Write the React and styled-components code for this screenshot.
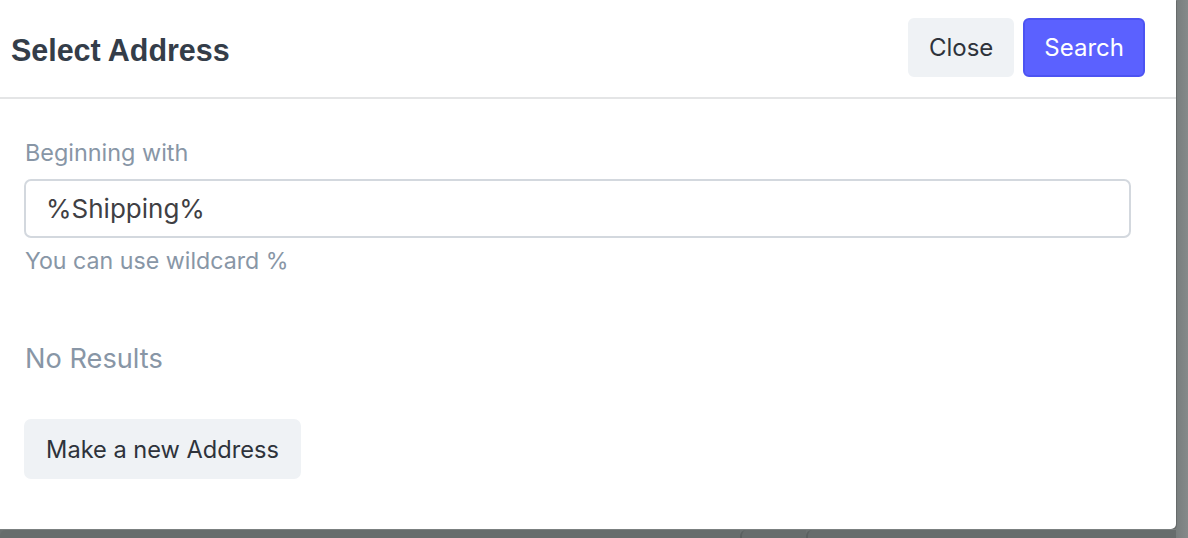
import styled, { createGlobalStyle } from "styled-components";

const GlobalStyle = createGlobalStyle`
  html, body {
    margin: 0;
    padding: 0;
    height: 100%;
  }
  body {
    background: linear-gradient(90deg, #6c7171 0%, #6c7171 98%, #858a8a 100%);
    font-family: Inter, "Noto Sans", sans-serif;
    overflow: hidden;
  }
`;

const Screen = styled.div`
  width: 1188px;
  height: 538px;
  display: flex;
  flex-direction: column;
`;

const Modal = styled.div`
  width: 1176px;
  height: 529px;
  background: #fff;
  border-bottom-right-radius: 5px;
  display: flex;
  flex-direction: column;
  box-shadow: 1px 1px 0 rgba(0, 0, 0, 0.15);
`;

const Header = styled.div`
  height: 97px;
  border-bottom: 2px solid #e4e5e6;
  display: flex;
  align-items: center;
  justify-content: space-between;
  padding: 0 31px 0 11px;
  box-sizing: content-box;
`;

const Title = styled.h2`
  margin: 0;
  font-family: "Liberation Sans", Arial, sans-serif;
  font-weight: 700;
  font-size: 30.5px;
  color: #343d49;
  letter-spacing: -0.05px;
  padding-top: 4px;
`;

const Actions = styled.div`
  display: flex;
  gap: 9px;
  padding-bottom: 3px;
`;

const Button = styled.button`
  height: 59px;
  padding: 0 ${(p) => p.$pad || 20}px;
  border-radius: 6px;
  border: 2px solid ${(p) => (p.$primary ? "#4c53f2" : "#eff2f5")};
  background: ${(p) => (p.$primary ? "#5b61ff" : "#eff2f5")};
  color: ${(p) => (p.$primary ? "#ffffff" : "#2e333b")};
  font-family: Inter, "Noto Sans", sans-serif;
  font-size: 24px;
  cursor: pointer;
`;

const Body = styled.div`
  padding: 40px 45px 0 24px;
  display: flex;
  flex-direction: column;
  align-items: flex-start;
`;

const Label = styled.label`
  font-size: 23.4px;
  color: #8896a6;
  margin-left: 1px;
  line-height: 28px;
`;

const Input = styled.input`
  margin-top: 12px;
  width: 1107px;
  height: 59px;
  box-sizing: border-box;
  border: 2px solid #d3d8de;
  border-radius: 7px;
  padding: 0 20px;
  font-family: Inter, "Noto Sans", sans-serif;
  font-size: 26px;
  color: #3f3f44;
  outline: none;
`;

const Hint = styled.div`
  margin-top: 9px;
  margin-left: 1px;
  font-size: 23.2px;
  color: #8896a6;
  line-height: 28px;
`;

const Empty = styled.div`
  margin-top: 67px;
  margin-left: 1px;
  font-size: 27.2px;
  color: #8896a6;
  line-height: 34px;
`;

const NewButton = styled(Button)`
  margin-top: 43px;
  width: 277px;
  height: 60px;
  border-radius: 7px;
  font-size: 23.6px;
`;

const Backdrop = styled.div`
  flex: 1;
  display: flex;
  width: 1176px;
  border-top: 1px solid #7b8080;
`;

const Segment = styled.div`
  width: ${(p) => p.$w}px;
  flex: ${(p) => (p.$w ? "none" : 1)};
  border-left: ${(p) => (p.$edge ? "2px solid #5b6060" : "none")};
  border-top-left-radius: 6px;
  background: #676c6c;
`;

export default function App() {
  return (
    <>
      <GlobalStyle />
      <Screen>
        <Modal>
          <Header>
            <Title>Select Address</Title>
            <Actions>
              <Button $pad={19}>Close</Button>
              <Button $primary $pad={19}>Search</Button>
            </Actions>
          </Header>
          <Body>
            <Label>Beginning with</Label>
            <Input defaultValue="%Shipping%" />
            <Hint>You can use wildcard %</Hint>
            <Empty>No Results</Empty>
            <NewButton>Make a new Address</NewButton>
          </Body>
        </Modal>
        <Backdrop>
          <Segment $w={740} />
          <Segment $w={64} $edge />
          <Segment $edge />
        </Backdrop>
      </Screen>
    </>
  );
}
